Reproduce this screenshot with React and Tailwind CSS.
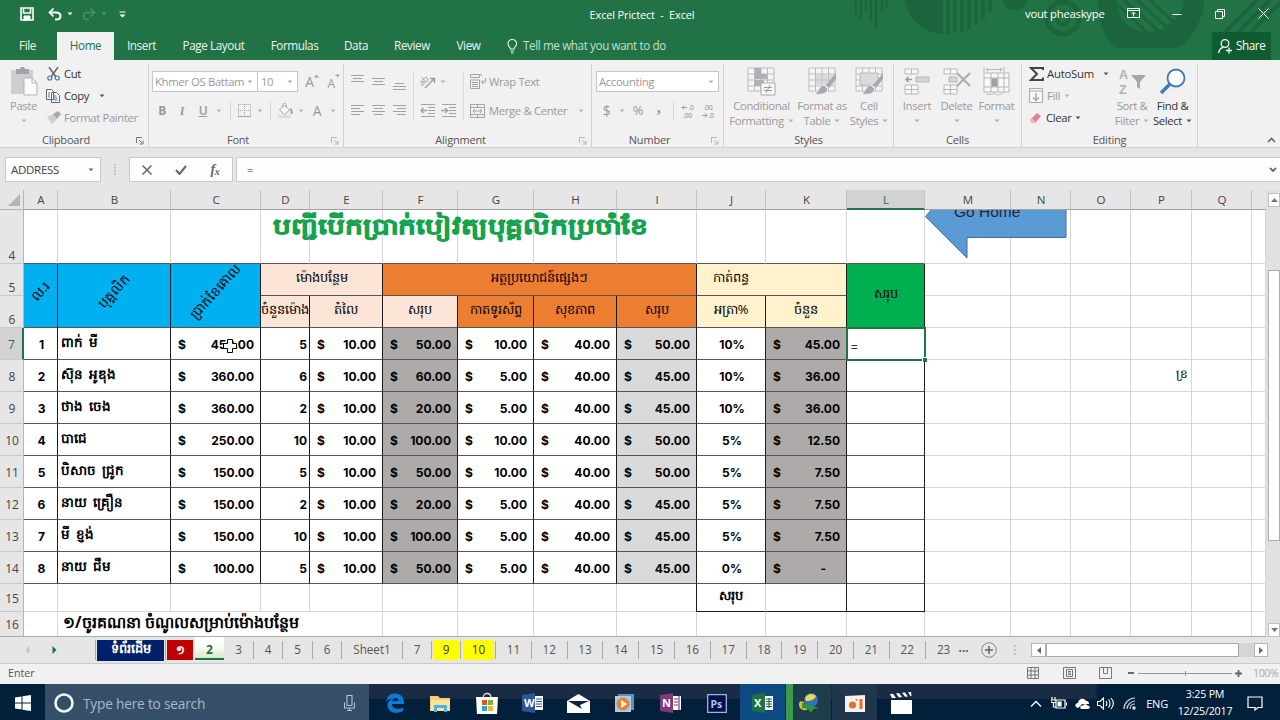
import { clsx } from 'clsx';

const ROWS = [
  { no: 1, name: 'ពាក់ មី', c: '450.00', d: 5, f: '50.00', g: '10.00', i: '50.00', j: '10%', k: '45.00' },
  { no: 2, name: 'ស៊ុន អូឌុង', c: '360.00', d: 6, f: '60.00', g: '5.00', i: '45.00', j: '10%', k: '36.00' },
  { no: 3, name: 'ថាង ចេង', c: '360.00', d: 2, f: '20.00', g: '5.00', i: '45.00', j: '10%', k: '36.00' },
  { no: 4, name: 'បាជេ', c: '250.00', d: 10, f: '100.00', g: '10.00', i: '50.00', j: '5%', k: '12.50' },
  { no: 5, name: 'បិសាច ជ្រូក', c: '150.00', d: 5, f: '50.00', g: '10.00', i: '50.00', j: '5%', k: '7.50' },
  { no: 6, name: 'នាយ គ្រឿន', c: '150.00', d: 2, f: '20.00', g: '5.00', i: '45.00', j: '5%', k: '7.50' },
  { no: 7, name: 'មី ខ្ញង់', c: '150.00', d: 10, f: '100.00', g: '5.00', i: '45.00', j: '5%', k: '7.50' },
  { no: 8, name: 'នាយ ជឹម', c: '100.00', d: 5, f: '50.00', g: '5.00', i: '45.00', j: '0%', k: '-' },
];

const COLUMNS = 'ABCDEFGHIJKLMNOPQ'.split('');

const SHEETS_LEFT = [
  { label: '3', width: 'w-[30px]' },
  { label: '4', width: 'w-[29px]' },
  { label: '5', width: 'w-[30px]' },
  { label: '6', width: 'w-[29px]' },
  { label: 'Sheet1', width: 'w-[61px]' },
  { label: '7', width: 'w-[29px]' },
];

const Slot = ({ className, children }) => (
  <div className={clsx('flex shrink-0 items-center justify-center', className)}>{children}</div>
);

const Caret = ({ className = 'text-[#b5b3b5]' }) => (
  <svg className={clsx('shrink-0', className)} width="6" height="4" viewBox="0 0 6 4">
    <path d="M0.5 0.5h5L3 3.3z" fill="currentColor" />
  </svg>
);

const Launcher = ({ className = 'text-[#b9b7b9]' }) => (
  <svg className={className} width="8" height="8" viewBox="0 0 8 8" fill="none" stroke="currentColor">
    <path d="M0.5 6V0.5H6M3 3l3.5 3.5M7 3.5V7H3.5" />
  </svg>
);

const Group = ({ label, width, launcher, labelShift, children }) => (
  <div className={clsx('flex h-full shrink-0 flex-col', width)}>
    <div className="relative my-1 flex flex-1 flex-col border-r border-[#d3d1d3]">
      <div className="flex h-[67px]">{children}</div>
      <div className="flex h-4 items-center justify-center">
        <span className={clsx('text-[11px] leading-none tracking-[-0.2px] text-[#555]', labelShift)}>{label}</span>
      </div>
      {launcher && <div className="absolute right-1 bottom-0.5">{launcher}</div>}
    </div>
  </div>
);

const BigButton = ({ width, icon, lines, dark }) => (
  <div
    className={clsx('flex shrink-0 flex-col items-center', width, dark ? 'text-[#333]' : 'text-[#9b999b]')}
  >
    <div className="flex h-[34px] items-center justify-center">{icon}</div>
    <div className="flex h-[15px] items-center text-[11.3px] leading-none whitespace-nowrap">{lines[0]}</div>
    <div className="flex h-[15px] items-center gap-1 text-[11.3px] leading-none whitespace-nowrap">
      {lines[1]}
      <Caret className={dark ? 'text-[#555]' : 'text-[#b5b3b5]'} />
    </div>
  </div>
);

const Lines = ({ rows, y = 3 }) => (
  <svg width="14" height="18" viewBox="0 0 14 18" stroke="#a3a1a3">
    {rows.map(([a, b], i) => (
      <path key={i} d={`M${a} ${y + i * 3 + 0.5}H${b}`} />
    ))}
  </svg>
);

const Grid3 = () => (
  <g>
    <path d="M1 1h26v23H1z" fill="#f7f6f7" stroke="#bdbabd" />
    <path d="M1 7h26M1 13h26M1 19h26M7.5 1v23M14 1v23M20.5 1v23" stroke="#bdbabd" />
  </g>
);

const Brush = () => (
  <g>
    <path d="M28 6L18 18l3 3 7-9z" fill="#aba9ab" />
    <path d="M16 18c-4 0-5 5-9 9 6 1 12 0 13-5z" fill="#aba9ab" stroke="#f1f1f1" />
  </g>
);

const TitleBar = () => (
  <div className="relative flex h-8 items-center text-white">
    <div className="flex w-[480px] items-center pb-1">
      <svg className="ml-5" width="14" height="14" viewBox="0 0 14 14" fill="none" stroke="#fff" strokeWidth="1.6">
        <path d="M1 1h12v12H1z" />
        <path d="M3.5 1v5h7V1" />
        <path d="M4 9h6v4H4zM6 10v3" fill="#fff" strokeWidth="1" />
      </svg>
      <svg className="ml-3.5" width="14" height="13" viewBox="0 0 14 13" fill="none" stroke="#fff" strokeWidth="2">
        <path d="M5.5 0.5L1.5 4.5l4 4" strokeWidth="1.7" />
        <path d="M1.5 4.5h6.5c6 0 6 7 0 7H7" />
      </svg>
      <Caret className="ml-[5px] text-white" />
      <svg className="ml-[9px]" width="14" height="13" viewBox="0 0 14 13" fill="none" stroke="#4b9069" strokeWidth="1.5">
        <path d="M8.5 0.5l4 4-4 4" />
        <path d="M12.5 4.5H6c-6 0-6 7 0 7h1" />
      </svg>
      <Caret className="ml-[5px] text-[#4b9069]" />
      <svg className="ml-3" width="7" height="7" viewBox="0 0 7 7" fill="#fff">
        <path d="M0.5 0.5h6v1h-6zM0.5 3.5h6l-3 3z" />
      </svg>
    </div>
    <div className="flex w-[320px] justify-center text-[11px] leading-none tracking-[-0.15px] whitespace-pre">
      <span className="pb-1 pl-1">Excel Prictect  -  Excel</span>
    </div>
    <div className="flex flex-1 items-center pb-1">
      <span className="ml-[225px] w-20 text-[11.3px] leading-none tracking-[-0.25px] whitespace-nowrap">vout pheaskype</span>
      <svg className="ml-[22px]" width="13" height="11" viewBox="0 0 13 11" fill="none" stroke="#fff">
        <path d="M0.5 0.5h12v9h-12zM0.5 2.5h12M6.5 8.5v-4M4.5 6l2-2 2 2" />
      </svg>
      <svg className="ml-8" width="10" height="10" viewBox="0 0 10 10" stroke="#fff">
        <path d="M0.5 5.5h9" />
      </svg>
      <svg className="ml-[33px]" width="11" height="10" viewBox="0 0 11 10" fill="none" stroke="#fff">
        <path d="M0.5 2.5h7v7h-7zM2.5 2.5v-2h7v7h-2" />
      </svg>
      <svg className="ml-8" width="11" height="11" viewBox="0 0 11 11" stroke="#fff">
        <path d="M0.5 0.5l10 10M10.5 0.5l-10 10" />
      </svg>
    </div>
  </div>
);

const MENU = [
  ['Insert', 'w-[55px]'],
  ['Page Layout', 'w-[89px]'],
  ['Formulas', 'w-[73px]'],
  ['Data', 'w-[50px]'],
  ['Review', 'w-[62px]'],
  ['View', 'w-[51px]'],
];

const MenuTabs = () => (
  <div className="relative flex h-7 text-[11.7px] leading-none tracking-[-0.4px] text-[#e9f5ee]">
    <Slot className="w-[57px] pr-0.5">File</Slot>
    <Slot className="w-[57px] bg-[#f1f1f1] text-[#217346]">Home</Slot>
    {MENU.map(([label, width]) => (
      <Slot key={label} className={width}>
        {label}
      </Slot>
    ))}
    <div className="flex flex-1 items-center text-[#bfe0cd]">
      <svg className="ml-[13px]" width="11" height="15" viewBox="0 0 11 15" fill="none" stroke="#e9f5ee" strokeWidth="1.1">
        <path d="M3.5 10C3.5 8 1 7.5 1 4.7a4.3 4.2 0 0 1 8.600 0C9.600 7.500 7 8 7 10zM3.500 12h3.600M4 14h2.500" />
      </svg>
      <span className="ml-[5px] whitespace-nowrap">Tell me what you want to do</span>
    </div>
    <div className="mr-[9px] flex w-[59px] items-center gap-1 bg-[#0e5c2f] pl-1.5 text-white">
      <svg width="14" height="15" viewBox="0 0 14 15" fill="none" stroke="#fff" strokeWidth="1.3">
        <circle cx="7" cy="4.5" r="3.8" />
        <path d="M0.7 14c0.3-3 2-5 4.5-5.7M11 8.5v6M8 11.5h6" />
      </svg>
      Share
    </div>
  </div>
);

const HeaderArt = () => (
  <svg className="absolute top-0 right-0" width="440" height="60" viewBox="840 0 440 60" fill="none" stroke="#1c643b">
    <path d="M856 0v14M861 0v19M866 0v10M871 0v22M876 0v28M882 0v10M887 0v7" strokeWidth="2.5" />
    <path d="M905 0h38v34c-22-1-34-16-38-34z" fill="#1c643b" stroke="none" />
    <path d="M948 0v34M955 0v33M962 0v32M969 0v29M976 0v25M983 0v20M990 0v12" strokeWidth="3.5" />
    <path d="M1003 0h24c-1 12-22 14-24 0z" fill="#1c643b" stroke="none" />
    <circle cx="1063" cy="18" r="16" strokeWidth="5" />
    <circle cx="1063" cy="18" r="6" strokeWidth="4" />
    <path d="M1098 0h18c2 19 13 32 32 32s34-14 36-32h20c-1 20-11 39-26 48h-62c-11-9-18-27-18-48z" fill="#1c643b" stroke="none" />
    <path d="M1112 0l50 46M1124 0l40 36M1137 0l34 31M1150 0l28 26" strokeWidth="3" />
    <path d="M1225 32l32-32M1238 32l32-32M1251 32l30-30" strokeWidth="4" />
  </svg>
);

const ClipboardGroup = () => (
  <Group label="Clipboard" width="w-[149px]" labelShift="mr-4" launcher={<Launcher className="text-[#777]" />}>
    <BigButton
      width="w-[47px]"
      lines={['Paste', '']}
      icon={
        <svg width="28" height="29" viewBox="0 0 28 29">
          <path d="M1 3h22v24H1z" fill="#cfcdd0" />
          <path d="M6 2h4c0-3 5-3 5 0h4v5H6z" fill="#a5a3aa" />
          <path d="M14 11h8l5 5v12H14z" fill="#fbfbfb" stroke="#b5b3b8" />
          <path d="M22 11v5h5" fill="none" stroke="#b5b3b8" />
        </svg>
      }
    />
    <div className="flex flex-col text-[11.3px] leading-none text-[#333]">
      <div className="flex h-5 items-center">
        <svg width="13" height="14" viewBox="0 0 13 14" fill="none" strokeWidth="1.5">
          <path d="M2 0l7 10M11 0L4 10" stroke="#666" />
          <circle cx="2.8" cy="11" r="2" stroke="#3e77b8" strokeWidth="1.2" />
          <circle cx="10.2" cy="11" r="2" stroke="#3e77b8" strokeWidth="1.2" />
        </svg>
        <span className="ml-1">Cut</span>
      </div>
      <div className="flex h-[23px] items-center">
        <svg className="-ml-px" width="14" height="14" viewBox="0 0 14 14" fill="#fff" stroke="#666">
          <path d="M0.5 0.5h5l2 2v8h-7zM5.5 3.5h5l3 3v7h-8z" />
          <path d="M2 4h2M2 6h2M2 8h2M7.5 7h3M7.5 9h4M7.5 11h4" stroke="#3e77b8" />
        </svg>
        <span className="ml-1 w-[35px]">Copy</span>
        <Caret className="text-[#555]" />
      </div>
      <div className="flex h-[21px] items-center text-[#9b999b]">
        <svg width="14" height="13" viewBox="0 0 14 13">
          <path d="M0 6l6-3 4 5-5 5z" fill="#d0cdd0" />
          <path d="M6 3l5-3 3 3-4 5z" fill="#aaa7aa" />
        </svg>
        <span className="ml-[3px] whitespace-nowrap">Format Painter</span>
      </div>
    </div>
  </Group>
);

const VSep = () => <div className="h-5 w-px shrink-0 bg-[#d8d6d8]" />;

const FontGroup = () => (
  <Group label="Font" width="w-[195px]" labelShift="mr-4" launcher={<Launcher />}>
    <div className="flex flex-col pt-[7px] pl-[3px] text-[#9b999b]">
      <div className="flex h-[21px] items-center">
        <div className="flex h-[21px] w-[106px] items-center justify-between border border-[#c6c6c6] bg-white pr-1 pl-0.5 text-[11.3px] leading-none whitespace-nowrap">
          Khmer OS Battam
          <Caret />
        </div>
        <div className="-ml-px flex h-[21px] w-[41px] items-center justify-between border border-[#c6c6c6] bg-white pr-1 pl-[3px] text-[11.3px] leading-none">
          10
          <Caret />
        </div>
        <Slot className="ml-[5px] w-[13px] text-[14px] leading-none">A</Slot>
        <svg className="-mt-3 -ml-0.5" width="5" height="4" viewBox="0 0 5 4" fill="#9aa5b5"><path d="M0 3.5h5L2.5 0.5z" /></svg>
        <Slot className="ml-1.5 w-[12px] pt-1 text-[12px] leading-none">A</Slot>
        <svg className="-mt-3 -ml-0.5" width="5" height="4" viewBox="0 0 5 4" fill="#9aa5b5"><path d="M0 0.5h5L2.5 3.5z" /></svg>
      </div>
      <div className="mt-2 flex h-[21px] items-center text-[12px] leading-none">
        <Slot className="w-[20px] font-bold">B</Slot>
        <Slot className="w-[20px] font-serif font-bold italic">I</Slot>
        <Slot className="w-[22px] font-semibold underline">U</Slot>
        <Slot className="w-[10px]"><Caret /></Slot>
        <Slot className="w-[13px]"><VSep /></Slot>
        <Slot className="w-[15px]">
          <svg width="13" height="13" viewBox="0 0 13 13" fill="none" stroke="#a5a3a5">
            <path d="M0.5 0.5h12v12M0.5 0.5v12M6.5 0v12M0 6.5h12" strokeDasharray="1 1" />
            <path d="M0 12.5h13" />
          </svg>
        </Slot>
        <Slot className="w-[16px]"><Caret /></Slot>
        <Slot className="w-[5px]"><VSep /></Slot>
        <Slot className="w-[24px]">
          <svg width="15" height="15" viewBox="0 0 15 15" fill="#fafafa" stroke="#a5a3a5">
            <path d="M1.5 7l5-5 5 5-5 4.5zM5 4V1.500c0-1.500 3-1.500 3 0v3" />
            <path d="M12 6c2 1 2 3 1.500 5" strokeWidth="2" fill="none" />
            <path d="M0 13.500h13" stroke="#e6d9dc" strokeWidth="3" />
          </svg>
        </Slot>
        <Slot className="w-[8px]"><Caret /></Slot>
        <Slot className="w-[24px] text-[14px]">A</Slot>
        <Slot className="w-[8px]"><Caret /></Slot>
      </div>
    </div>
  </Group>
);

const Indent = ({ flip }) => (
  <svg width="16" height="13" viewBox="0 0 16 13" stroke="#a5a3a5" fill="none">
    <path d="M1 0.5h14M8 3.500h7M8 6.500h7M8 9.500h7M1 12.500h14" />
    {flip ? <path d="M0 6.500h6M4 4l2.500 2.500L4 9" strokeWidth="1.5" /> : <path d="M7 6.500H1M3.500 4L1 6.500 3.500 9" strokeWidth="1.5" />}
  </svg>
);

const AlignmentGroup = () => (
  <Group label="Alignment" width="w-[248px]" labelShift="mr-3.5" launcher={<Launcher />}>
    <div className="flex pt-[7px] pl-[3px] text-[11.3px] leading-none text-[#9b999b]">
      <div className="flex w-[63px] flex-col gap-2">
        <div className="flex h-[21px] items-center">
          <Slot className="w-[21px]"><Lines y={2} rows={[[0, 13], [2, 11], [0, 13]]} /></Slot>
          <Slot className="w-[21px]"><Lines y={5} rows={[[0, 13], [2, 11], [0, 13]]} /></Slot>
          <Slot className="w-[21px]"><Lines y={10} rows={[[2, 11], [0, 13], [0, 13]]} /></Slot>
        </div>
        <div className="flex h-[21px] items-center">
          <Slot className="w-[21px]"><Lines rows={[[0, 13], [0, 9], [0, 13], [0, 9]]} /></Slot>
          <Slot className="w-[21px]"><Lines rows={[[0, 13], [2, 11], [0, 13], [2, 11]]} /></Slot>
          <Slot className="w-[21px]"><Lines rows={[[0, 13], [4, 13], [0, 13], [4, 13]]} /></Slot>
        </div>
      </div>
      <div className="ml-[3px] flex h-[50px] w-[51px] flex-col gap-2 border-x border-[#dcdadc]">
        <div className="flex h-[21px] items-center gap-1 pl-1.5">
          <svg width="16" height="15" viewBox="0 0 16 15" fill="none" stroke="#9b999b" strokeWidth="1.3">
            <text x="-1" y="9" fontSize="9" fill="#9b999b" stroke="none" transform="rotate(-40 5 7)">ab</text>
            <path d="M5 14L14 5M10 4.500h4.500V9" />
          </svg>
          <Caret />
        </div>
        <div className="flex h-[21px] items-center gap-[5px] pl-1.5">
          <Indent />
          <Indent flip />
        </div>
      </div>
      <div className="ml-1.5 flex flex-col gap-2 whitespace-nowrap">
        <div className="flex h-[21px] items-center gap-[3px]">
          <svg width="16" height="15" viewBox="0 0 16 15" fill="none" stroke="#a5a3a5">
            <path d="M0.5 0.5h9v3h-9zM0.5 6h9v8.500h-9zM2 8.500h6M2 10.500h6M2 12.500h6M12 1h-2M15.500 4v4h-4M13.500 6l-2 2 2 2" />
          </svg>
          Wrap Text
        </div>
        <div className="flex h-[21px] items-center gap-[3px]">
          <svg width="16" height="14" viewBox="0 0 16 14" fill="none" stroke="#a5a3a5">
            <path d="M0.5 0.5h14v13h-14zM0.5 3.500h14M0.5 10.500h14M7.500 0.5v3M7.500 10.500v3M3 7h9M5 5L3 7l2 2M10 5l2 2-2 2" />
          </svg>
          <span className="w-[86px]">Merge &amp; Center</span>
          <Caret />
        </div>
      </div>
    </div>
  </Group>
);

const NumberGroup = () => (
  <Group label="Number" width="w-[132px]" labelShift="mr-4" launcher={<Launcher />}>
    <div className="flex flex-col pt-[7px] pl-1 text-[#9b999b]">
      <div className="flex h-[21px] w-[123px] items-center justify-between border border-[#c6c6c6] bg-white pr-1 pl-0.5 text-[11.3px] leading-none">
        Accounting
        <Caret />
      </div>
      <div className="mt-2 flex h-[21px] items-center leading-none">
        <Slot className="w-[21px] text-[14px]">$</Slot>
        <Slot className="w-[10px]"><Caret /></Slot>
        <Slot className="w-[22px] text-[13px]">%</Slot>
        <Slot className="w-[19px] pb-1.5 font-['Liberation_Serif',serif] text-[16px] font-bold">,</Slot>
        <Slot className="w-[11px]"><VSep /></Slot>
        <svg className="ml-0.5 overflow-visible font-['Liberation_Sans',sans-serif]" width="15" height="16" viewBox="0 0 15 16" fill="none" stroke="#9b999b">
          <path d="M1 4.500h5M3 2.500L1 4.500l2 2" />
          <text x="7.500" y="7" fontSize="7" fill="#8b898b" stroke="none">.0</text>
          <text x="2" y="15" fontSize="7" fill="#8b898b" stroke="none">.00</text>
        </svg>
        <svg className="ml-[5px] overflow-visible font-['Liberation_Sans',sans-serif]" width="15" height="16" viewBox="0 0 15 16" fill="none" stroke="#9b999b">
          <path d="M1 12.500h5M4 10.500l2 2-2 2" />
          <text x="2.500" y="7" fontSize="7" fill="#8b898b" stroke="none">.00</text>
          <text x="7.500" y="15" fontSize="7" fill="#8b898b" stroke="none">.0</text>
        </svg>
      </div>
    </div>
  </Group>
);

const StylesGroup = () => (
  <Group label="Styles" width="w-[170px]">
    <BigButton
      width="w-[75px]"
      lines={['Conditional', 'Formatting']}
      icon={
        <svg width="29" height="29" viewBox="0 0 29 29">
          <Grid3 />
          <path d="M8 1h6v6H8zM8 7h12v5H8zM8 13h9v6H8z" fill="#b3b0b5" />
          <path d="M14 16h14v12H14z" fill="#fafafa" stroke="#aaa8aa" />
          <path d="M17 20.500h8M17 23.500h8M23 18l-4 8" stroke="#999" />
        </svg>
      }
    />
    <BigButton
      width="w-[46px]"
      lines={['Format as', 'Table']}
      icon={
        <svg width="29" height="29" viewBox="0 0 29 29">
          <Grid3 />
          <path d="M8 8h19v11H8z" fill="#dddadf" />
          <path d="M14 7v12M20.500 7v12M8 13h19" stroke="#c3c0c3" />
          <Brush />
        </svg>
      }
    />
    <BigButton
      width="w-[48px]"
      lines={['Cell', 'Styles']}
      icon={
        <svg width="29" height="29" viewBox="0 0 29 29">
          <Grid3 />
          <path d="M5 6h18v12H5z" fill="#dddadf" stroke="#bdbabd" />
          <Brush />
        </svg>
      }
    />
  </Group>
);

const CellsGroup = () => (
  <Group label="Cells" width="w-[128px]">
    <BigButton
      width="w-[46px]"
      lines={['Insert', '']}
      icon={
        <svg width="26" height="27" viewBox="0 0 26 27" fill="#f8f8f8" stroke="#b9b6b9">
          <path d="M1 1h13v5H1zM7.500 1v5M1 17h13v9H1zM7.500 17v9M1 21.500h13" />
          <path d="M12 9h13v5H12z" fill="#d6d3d9" />
          <path d="M8 11.500H2M4.500 9L2 11.500 4.500 14" fill="none" stroke="#9a98a0" strokeWidth="1.5" />
        </svg>
      }
    />
    <BigButton
      width="w-[33px]"
      lines={['Delete', '']}
      icon={
        <svg width="28" height="27" viewBox="0 0 28 27" fill="#f8f8f8" stroke="#b9b6b9">
          <path d="M1 1h13v5H1zM7.500 1v5M1 17h13v9H1zM7.500 17v9M1 21.500h13" />
          <path d="M6 9h8v5H6z" fill="#d6d3d9" />
          <path d="M14 5l13 13M27 5L14 18" fill="none" stroke="#b3aaac" strokeWidth="2" />
        </svg>
      }
    />
    <BigButton
      width="w-[47px]"
      lines={['Format', '']}
      icon={
        <svg width="27" height="29" viewBox="0 0 27 29" fill="#f8f8f8" stroke="#b9b6b9">
          <path d="M1 0v5M21 0v5M3 2.500h16M5 1L3 2.500 5 4M17 1l2 1.500L17 4" />
          <path d="M1 6h25v19H1zM1 11h25M1 20h25M8 6v19M15 6v19M21 6v19M3 27c6 2 8-2 10 0s6 0 7-1" />
          <path d="M8.500 11.500h6v8h-6z" fill="#a19fa3" />
        </svg>
      }
    />
  </Group>
);

const EditingGroup = () => (
  <Group label="Editing" width="w-[176px]">
    <div className="flex w-[88px] flex-col pl-[7px] text-[11.3px] leading-none text-[#333]">
      <div className="flex h-5 items-center">
        <svg width="15" height="14" viewBox="0 0 15 14" fill="none" stroke="#444" strokeWidth="2">
          <path d="M14 3V1H2l6 6-6 6h12v-2.500" />
        </svg>
        <span className="ml-[3px] w-[56px] tracking-[-0.2px]">AutoSum</span>
        <Caret className="text-[#555]" />
      </div>
      <div className="flex h-[23px] items-center text-[#9b999b]">
        <svg width="14" height="15" viewBox="0 0 14 15" fill="#f8f8f8" stroke="#aaa8aa">
          <path d="M0.5 0.5h13v14h-13zM0.5 3h13" />
          <path d="M7 5v7M4 9.500l3 3 3-3" fill="none" strokeWidth="1.5" />
        </svg>
        <span className="mr-1 ml-1">Fill</span>
        <Caret />
      </div>
      <div className="flex h-[21px] items-center">
        <svg width="14" height="12" viewBox="0 0 14 12">
          <path d="M1 8l7-7 4 3-6 7H3z" fill="#df8093" />
          <path d="M1 8l2-2 4 4-1 1H3z" fill="#eeb4bf" />
        </svg>
        <span className="mr-1 ml-[3px]">Clear</span>
        <Caret className="text-[#555]" />
      </div>
    </div>
    <BigButton
      width="w-[44px]"
      lines={['Sort &', 'Filter']}
      icon={
        <svg className="overflow-visible font-['Liberation_Sans',sans-serif]" width="28" height="28" viewBox="0 0 28 28">
          <path d="M13 8h15l-6 7v7l-3-2v-5z" fill="#a9a7a9" />
          <text x="1" y="11.500" fontSize="12.500" fontWeight="700" fill="#b3b1b8">A</text>
          <text x="1" y="26.500" fontSize="12.500" fontWeight="700" fill="#b3b1b8">Z</text>
        </svg>
      }
    />
    <BigButton
      dark
      width="w-[37px]"
      lines={['Find &', 'Select']}
      icon={
        <svg width="27" height="27" viewBox="0 0 27 27" fill="#fdfdfd" stroke="#4478b5">
          <path d="M11 16l-9 9" strokeWidth="3.5" />
          <circle cx="17" cy="10" r="8.5" strokeWidth="1.8" />
        </svg>
      }
    />
  </Group>
);

const Ribbon = () => (
  <div className="flex h-[88px] border-b border-[#d2d0d2] bg-[#f1f1f1]">
    <ClipboardGroup />
    <FontGroup />
    <AlignmentGroup />
    <NumberGroup />
    <StylesGroup />
    <CellsGroup />
    <EditingGroup />
    <div className="flex flex-1 items-end justify-end pr-1 pb-1">
      <svg width="9" height="6" viewBox="0 0 9 6" fill="none" stroke="#666" strokeWidth="1.6">
        <path d="M1 5l3.500-3.500L8 5" />
      </svg>
    </div>
  </div>
);

const FormulaBar = () => (
  <div className="flex h-[42px] items-center pt-px pl-[5px]">
    <div className="flex h-[25px] w-[96px] items-center justify-between border border-[#c9c9c9] bg-[#fdfdfd] pr-1.5 pl-[5px] text-[11.6px] leading-none text-[#444]">
      ADDRESS
      <Caret className="text-[#666]" />
    </div>
    <Slot className="w-7">
      <svg width="2" height="11" viewBox="0 0 2 11" fill="#aaa">
        <path d="M0 0h1.500v1.500H0zM0 3h1.500v1.500H0zM0 6h1.500v1.500H0zM0 9h1.500v1.500H0z" />
      </svg>
    </Slot>
    <div className="flex h-[25px] w-[104px] items-center border border-[#c9c9c9] bg-[#fdfdfd]">
      <Slot className="w-[34px]">
        <svg width="10" height="10" viewBox="0 0 10 10" stroke="#666" strokeWidth="1.5"><path d="M0.5 0.5l9 9M9.500 0.5l-9 9" /></svg>
      </Slot>
      <Slot className="w-[34px]">
        <svg width="12" height="10" viewBox="0 0 12 10" fill="none" stroke="#666" strokeWidth="2"><path d="M1 5l3.500 4L11 1" /></svg>
      </Slot>
      <Slot className="w-[34px] font-['Liberation_Serif',serif] text-[14px] font-bold italic leading-none text-[#666]">
        f<span className="pt-1 text-[10px]">x</span>
      </Slot>
    </div>
    <div className="ml-[3px] flex h-[25px] flex-1 items-center justify-between border border-r-0 border-[#c9c9c9] bg-[#fdfdfd] pr-[3px] pl-2.5 text-[11.3px] leading-none text-[#333]">
      =
      <svg width="8" height="6" viewBox="0 0 8 6" fill="none" stroke="#666" strokeWidth="1.8"><path d="M1 1l3 3 3-3" /></svg>
    </div>
  </div>
);

const line = 'border-r border-b';
const plain = 'border-[#d6d6d6]';
const dark = 'border-r-[#1c1c1c] border-b-[#555]';

const Cell = ({ className, children }) => (
  <div className={clsx('flex min-w-0 items-center overflow-hidden leading-none whitespace-nowrap', line, className)}>
    {children}
  </div>
);

const Blank = ({ count, className }) =>
  Array.from({ length: count }, (_, i) => <Cell key={i} className={clsx(className || plain)} />);

const RowHead = ({ n, active, low }) => (
  <div
    className={clsx(
      "flex justify-center border-b border-[#c8c8c8] pl-px font-['Open_Sans',sans-serif] text-[12px] font-normal leading-none",
      low ? 'items-end pb-px' : 'items-center pt-0.5',
      active ? 'border-r-2 border-r-[#217346] bg-[#d2d2d2] text-[#217346]' : 'border-r border-r-[#b5b5b5] bg-[#e6e6e6] text-[#444]'
    )}
  >
    {n}
  </div>
);

const Money = ({ value, bg, dash }) => (
  <Cell className={clsx(dark, 'justify-between pt-[3px] pl-[7px]', dash ? 'pr-5' : 'pr-1.5', bg)}>
    <span>$</span>
    <span>{value}</span>
  </Cell>
);

const DataRow = ({ row, index }) => (
  <>
    <RowHead n={index + 7} active={index === 0} />
    <Cell className={clsx(dark, 'justify-center pt-[3px] pl-0.5')}>{row.no}</Cell>
    <Cell className={clsx(dark, 'pb-px pl-[3px] text-[13.5px] [word-spacing:3px]')}>{row.name}</Cell>
    <Money value={row.c} />
    <Cell className={clsx(dark, 'justify-end pt-[3px] pr-0.5')}>{row.d}</Cell>
    <Money value="10.00" />
    <Money value={row.f} bg="bg-[#aeaaaa]" />
    <Money value={row.g} />
    <Money value="40.00" />
    <Money value={row.i} bg="bg-[#d9d9d9]" />
    <Cell className={clsx(dark, 'justify-center pt-[3px] pl-0.5')}>{row.j}</Cell>
    <Money value={row.k} bg="bg-[#aeaaaa]" dash={row.k === '-'} />
    {index === 0 ? (
      <div className="relative z-10 -mt-px -mr-px -mb-px -ml-px flex items-center border-2 border-[#217346] pt-1 pl-0.5 text-[13px] font-normal leading-none text-[#333]">
        =
        <div className="absolute -right-[3px] -bottom-[3px] size-[5px] border-t border-l border-white bg-[#217346]" />
      </div>
    ) : (
      <Cell className={dark} />
    )}
    <Blank count={3} />
    {index === 1 ? (
      <Cell className={clsx(plain, 'justify-end pr-[3px] pb-1 text-[12px] font-normal')}>ខ្រ</Cell>
    ) : (
      <Blank count={1} />
    )}
    <Blank count={2} />
  </>
);

const Slanted = ({ children }) => (
  <Cell className={clsx(dark, 'row-span-2 justify-center bg-[#00b0f0] pb-2 text-[13.5px]')}>
    <span className="-rotate-[48deg]">{children}</span>
  </Cell>
);

const Head = ({ className, children }) => (
  <Cell className={clsx(dark, 'pb-1 text-[13px]', className)}>{children}</Cell>
);

const Sheet = () => (
  <div className="flex h-[447px] tracking-normal">
    <div className="relative w-[1266px] overflow-hidden border-b border-[#ababab] bg-white">
      <div className="grid grid-cols-[24px_34px_113px_90px_49px_73px_75px_76px_83px_80px_69px_81px_78px_86px_60px_60px_61px_60px_14px] grid-rows-[20px_54px_repeat(10,32px)_28px_25px] text-black">
        <div className="flex items-end justify-end border-r border-b border-[#b5b5b5] bg-[#e6e6e6] p-[3px]">
          <svg width="12" height="12" viewBox="0 0 12 12" fill="#b5b5b5"><path d="M12 0v12H0z" /></svg>
        </div>
        {COLUMNS.map((c) => (
          <div
            key={c}
            className={clsx(
              'flex items-center justify-center border-r border-r-[#c3c3c3] pt-px pl-px text-[11.5px] leading-none',
              c === 'L' ? 'border-b-2 border-b-[#217346] bg-[#d2d2d2] text-[#217346]' : 'border-b border-b-[#9f9f9f] bg-[#e6e6e6] text-[#444]'
            )}
          >
            {c}
          </div>
        ))}
        <div className="border-b border-b-[#9f9f9f] bg-[#e6e6e6]" />

        <RowHead n={4} low />
        <Blank count={3} className="border-r-[#d6d6d6] border-b-[#555]" />
        <div className="relative col-span-8 grid grid-cols-[49px_73px_75px_76px_83px_80px_69px_81px]">
          <Blank count={8} className="border-r-[#d6d6d6] border-b-[#555]" />
          <div className="absolute top-0 left-[52px] w-[288px] scale-x-[1.275] text-center text-[22px] font-bold leading-[30px] whitespace-nowrap text-[#16a34f] [-webkit-text-stroke:0.7px_#16a34f]">
            បញ្ជីបើកប្រាក់បៀវត្យបុគ្គលិកប្រចាំខែ
          </div>
        </div>
        <Blank count={1} className="border-r-[#d6d6d6] border-b-[#555]" />
        <Blank count={6} />

        <RowHead n={5} low />
        <Slanted>ល.រ</Slanted>
        <Slanted>បុគ្គលិក</Slanted>
        <Slanted>ប្រាក់ខែគោល</Slanted>
        <Head className="col-span-2 justify-center bg-[#fce4d6]">ម៉ោងបន្ថែម</Head>
        <Head className="col-span-4 justify-center bg-[#ed7d31]">អត្ថប្រយោជន៍ផ្សេងៗ</Head>
        <Head className="col-span-2 bg-[#fff2cc] pl-4">កាត់ពន្ធ</Head>
        <Head className="row-span-2 justify-center bg-[#00b050]">សរុប</Head>
        <Blank count={6} />

        <RowHead n={6} low />
        <Head className="justify-center bg-[#fce4d6]">ចំនួនម៉ោង</Head>
        <Head className="justify-center bg-[#fce4d6]">តំលៃ</Head>
        <Head className="justify-center bg-[#fce4d6]">សរុប</Head>
        <Head className="justify-center bg-[#ed7d31]">កាតទូរស័ព្ទ</Head>
        <Head className="justify-center bg-[#ed7d31]">សុខភាព</Head>
        <Head className="justify-center bg-[#ed7d31]">សរុប</Head>
        <Head className="justify-center bg-[#fff2cc]">អត្រា%</Head>
        <Head className="justify-center bg-[#fff2cc]">ចំនួន</Head>
        <Blank count={6} />

        <div className="col-span-full row-span-8 grid grid-cols-subgrid grid-rows-subgrid font-['Inter',sans-serif] text-[12px] font-bold">
          {ROWS.map((row, i) => (
            <DataRow key={row.no} row={row} index={i} />
          ))}
        </div>

        <RowHead n={15} />
        <Blank count={9} />
        <Cell className="-ml-px justify-center border-l border-r-[#d6d6d6] border-b-[#1c1c1c] border-l-[#1c1c1c] pb-1 text-[13px] font-bold">សរុប</Cell>
        <Cell className="border-r-[#1c1c1c] border-b-[#1c1c1c]" />
        <Cell className="border-r-[#1c1c1c] border-b-[#1c1c1c]" />
        <Blank count={6} />

        <RowHead n={16} />
        <Blank count={1} />
        <Cell className={clsx(plain, 'col-span-4 pb-0.5 pl-[5px] text-[15.8px] font-bold')}>១/ចូរគណនា ចំណូលសម្រាប់ម៉ោងបន្ថែម</Cell>
        <Blank count={13} />
      </div>

      {/* callout shape floating above the cells */}
      <div className="absolute top-5 left-[925px] h-[50px] w-[142px] overflow-hidden">
        <svg className="absolute inset-0" width="142" height="50" viewBox="0 0 142 50">
          <path d="M7 -1L0.5 6.500 42 48V27.500h99V-1z" fill="#5b9bd5" stroke="#41719c" />
        </svg>
        <span className="absolute -top-[7px] left-[29px] font-['Liberation_Sans',sans-serif] text-[15.5px] leading-[18px] whitespace-nowrap text-[#1b2a3a]">
          Go Home
        </span>
      </div>

      {/* cell pointer */}
      <svg className="absolute top-[149px] left-[223px]" width="14" height="14" viewBox="0 0 14 14">
        <path d="M4.500 0.5h5v4h4v5h-4v4h-5v-4h-4v-5h4z" fill="#fff" stroke="#000" />
      </svg>
    </div>
    <div className="flex flex-1 flex-col bg-[#e0e0e0] pt-[3px] pl-0.5">
      <Slot className="h-[14px] w-full border border-[#c0c0c0] bg-white">
        <svg width="7" height="4" viewBox="0 0 7 4" fill="#777"><path d="M0 4h7L3.500 0z" /></svg>
      </Slot>
      <div className="h-[63px]" />
      <div className="h-[271px] border border-[#ababab] bg-white" />
      <div className="flex-1" />
      <Slot className="h-[14px] w-full border border-[#c0c0c0] bg-white">
        <svg width="7" height="4" viewBox="0 0 7 4" fill="#777"><path d="M0 0h7L3.500 4z" /></svg>
      </Slot>
    </div>
  </div>
);

const SheetTabs = () => (
  <div className="flex h-[27px] border-b border-[#c9c9c9] bg-[#e6e6e6] text-[11.7px] leading-none tracking-normal text-[#555]">
    <div className="flex w-[95px] items-center">
      <svg className="ml-[25px]" width="5" height="8" viewBox="0 0 5 8" fill="#c3c3c3"><path d="M4.500 0v8L0.500 4z" /></svg>
      <svg className="ml-[22px]" width="5" height="8" viewBox="0 0 5 8" fill="#217346"><path d="M0.500 0v8l4-4z" /></svg>
    </div>
    <div className="my-[3px] flex items-center border-x border-[#aaa]">
      <div className="mx-px flex h-[21px] w-[67px] items-center justify-center overflow-hidden bg-[#00206b] pb-1 text-[13px] font-semibold whitespace-nowrap text-white">
        ទំព័រដើម
      </div>
    </div>
    <Slot className="my-[3px] mr-[2px] ml-px w-[26px] bg-[#c00000] font-bold text-white">១</Slot>
    <Slot className="mb-[3px] w-[29px] border-b-2 border-[#217346] bg-linear-to-b from-white from-40% to-[#d3ecc5] pt-1 text-[12px] font-bold text-[#217346]">
      2
    </Slot>
    {SHEETS_LEFT.map(({ label, width }) => (
      <Slot key={label} className={clsx('my-1 border-r border-[#aaa]', width)}>{label}</Slot>
    ))}
    <Slot className="my-[3px] mr-px ml-px w-[26px] bg-[#ff0] text-[#333]">9</Slot>
    <div className="my-1 w-px bg-[#aaa]" />
    <Slot className="my-[3px] mr-px ml-0.5 w-[31px] bg-[#ff0] text-[#333]">10</Slot>
    <div className="my-1 w-px bg-[#aaa]" />
    {Array.from({ length: 12 }, (_, i) => (
      <Slot key={i} className="my-1 w-[35.8px] border-r border-[#aaa]">{i + 11}</Slot>
    ))}
    <Slot className="w-[32px] pl-1">23</Slot>
    <Slot className="w-[12px] pb-1 font-bold text-[#217346]">...</Slot>
    <Slot className="ml-2 w-[22px]">
      <svg width="16" height="16" viewBox="0 0 16 16" fill="none" stroke="#888">
        <circle cx="8" cy="8" r="7.3" />
        <path d="M4 8h8M8 4v8" strokeWidth="1.5" stroke="#666" />
      </svg>
    </Slot>
    <Slot className="w-[30px]">
      <svg width="2" height="11" viewBox="0 0 2 11" fill="#aaa">
        <path d="M0 0h1.500v1.500H0zM0 4h1.500v1.500H0zM0 8h1.500v1.500H0z" />
      </svg>
    </Slot>
    <div className="my-[6px] mr-3 ml-auto flex w-[237px] bg-[#d5d5d5]">
      <Slot className="w-[15px] border border-[#b5b5b5] bg-white">
        <svg width="4" height="7" viewBox="0 0 4 7" fill="#666"><path d="M4 0v7L0 3.500z" /></svg>
      </Slot>
      <div className="w-[193px] border border-[#aaa] bg-white" />
      <div className="flex-1" />
      <Slot className="w-[14px] border border-[#b5b5b5] bg-white">
        <svg width="4" height="7" viewBox="0 0 4 7" fill="#666"><path d="M0 0v7l4-3.500z" /></svg>
      </Slot>
    </div>
  </div>
);

const StatusBar = () => (
  <div className="flex h-5 items-center bg-[#f1f1f1] pb-0.5 text-[10.7px] leading-none tracking-normal text-[#555]">
    <span className="ml-2 flex-1">Enter</span>
    <svg width="12" height="12" viewBox="0 0 12 12" fill="none" stroke="#777"><path d="M0.5 0.5h11v11h-11zM4 0v12M8 0v12M0 4h12M0 8h12" /></svg>
    <svg className="ml-6" width="13" height="12" viewBox="0 0 13 12" fill="none" stroke="#777"><path d="M0.5 0.5h12v11h-12zM3.500 2.500h6v7h-6zM5 4.500h3M5 6h3M5 7.500h3" /></svg>
    <svg className="ml-[23px]" width="13" height="12" viewBox="0 0 13 12" fill="none" stroke="#777"><path d="M0.5 0.5h12v11h-12zM4.500 0v6.500h4V0" /></svg>
    <div className="ml-4 h-[2px] w-1.5 bg-[#666]" />
    <svg className="ml-1" width="94" height="5" viewBox="0 0 94 5" stroke="#999"><path d="M0 2.500h94M47.500 0v5" /></svg>
    <svg className="ml-[3px]" width="7" height="7" viewBox="0 0 7 7" stroke="#666" strokeWidth="1.8"><path d="M0 3.500h7M3.500 0v7" /></svg>
    <span className="mr-0.5 ml-[11px] w-[25px] tracking-[-0.45px] text-[#aaa]">100%</span>
  </div>
);

const Tile = ({ color, letter, paper }) => (
  <svg width="22" height="20" viewBox="0 0 22 20">
    <path d="M11 3h10v14H11z" fill="#fff" />
    <path d={paper} stroke={color} fill="none" strokeWidth="1.2" />
    <path d="M0 2l13-2v20L0 18z" fill={color} />
    <text x="2" y="14" fontSize="11" fontWeight="700" fill="#fff">{letter}</text>
  </svg>
);

const TASKS = [
  {
    id: 'edge',
    icon: (
      <svg width="20" height="20" viewBox="0 0 20 20" fill="none">
        <path d="M1 9C2 2 7 0.5 10.500 0.5c5 0 9 4 8.500 10.500H7c0 5 6 6 11 3.500V18c-6 3.500-15.500 2-15.500-6C2.500 9 4.500 7 7 6 4 6 2 7 1 9zM7.200 8h6.300c0-4-5.500-4.500-6.300 0z" fill="#0a7bd8" />
      </svg>
    ),
  },
  {
    id: 'explorer',
    icon: (
      <svg width="21" height="18" viewBox="0 0 21 18">
        <path d="M0 2h8l2 2h10v13H0z" fill="#f3d272" />
        <path d="M1 6h19v11H1z" fill="#fbe49a" />
        <path d="M4 11h13v7h-3v-4H7v4H4z" fill="#4cb3dd" />
      </svg>
    ),
  },
  {
    id: 'store',
    icon: (
      <svg width="22" height="22" viewBox="0 0 22 22">
        <path d="M7 6c0-6 8-6 8 0" fill="none" stroke="#ddd" strokeWidth="1.3" />
        <path d="M0 5h22l-1 17H1z" fill="#fff" />
        <path d="M6 8h5v5H6z" fill="#e2522b" />
        <path d="M12 8h5v5h-5z" fill="#7cb928" />
        <path d="M6 14h5v5H6z" fill="#2aa3e0" />
        <path d="M12 14h5v5h-5z" fill="#f5b921" />
      </svg>
    ),
  },
  { id: 'word', icon: <Tile color="#2b579a" letter="W" paper="M14 6h6M14 8.500h6M14 11h6M14 13.500h6" /> },
  {
    id: 'mail',
    icon: (
      <svg width="23" height="19" viewBox="0 0 23 19">
        <path d="M0 7L11.500 0 23 7v12H0z" fill="#fff" />
        <path d="M1 7h21l-9 4 2 4z" fill="#10263c" />
      </svg>
    ),
  },
  {
    id: 'player',
    icon: (
      <svg width="19" height="18" viewBox="0 0 19 18">
        <path d="M3 0h16v16H3z" fill="#5b93c0" />
        <path d="M0 2h16v16H0z" fill="#a9cde6" />
        <circle cx="8" cy="10" r="6.5" fill="#ee7f2b" />
        <path d="M6 6l6 4-6 4z" fill="#fff" />
      </svg>
    ),
  },
  { id: 'onenote', icon: <Tile color="#80397b" letter="N" paper="M14 6h4M14 9h4M14 12h4M19 3v14" /> },
  {
    id: 'photoshop',
    icon: (
      <svg width="20" height="19" viewBox="0 0 20 19">
        <path d="M0.7 0.7h18.600v17.600H0.7z" fill="#0a0c45" stroke="#8fb8ee" strokeWidth="1.3" />
        <text x="3.500" y="13.500" fontSize="10.5" fontWeight="700" fill="#a6c8f5">Ps</text>
      </svg>
    ),
  },
  { id: 'excel', bg: 'bg-[#0d4a82]', icon: <Tile color="#1e7145" letter="X" paper="M14 6h6M14 8.500h6M14 11h6M14 13.500h6M17 5v10" /> },
  {
    id: 'downloader',
    bg: 'bg-[#1d3c4c] border-l-[7px] border-[#3c9a4c] pr-2',
    icon: (
      <svg width="23" height="20" viewBox="0 0 23 20">
        <circle cx="14" cy="7" r="7" fill="#2f74b8" />
        <path d="M8 5c3-5 8-5 11-2-1 4-6 5-10 5z" fill="#f0d848" />
        <path d="M3 8c-3 6 1 10 7 9l1-3c-3 1-5-1-4-5z" fill="#e5b63a" />
        <path d="M5 10l17 5-6 1-2 4-3-4-6-1z" fill="#2b9a34" />
      </svg>
    ),
  },
  {
    id: 'recorder',
    bg: 'bg-[#20364c]',
    icon: (
      <svg width="20" height="17" viewBox="0 0 20 17">
        <path d="M0 1l20-1v17H0z" fill="#f4f2ee" />
        <circle cx="7.500" cy="10" r="3.6" fill="#e5702a" />
        <path d="M14.500 4h3v10h-3z" fill="#e5702a" />
        <circle cx="11.500" cy="5" r="1" fill="#e5702a" />
      </svg>
    ),
  },
  {
    id: 'movies',
    icon: (
      <svg width="22" height="22" viewBox="0 0 22 22" fill="#fff">
        <path d="M1 8h21v14H1z" />
        <path d="M0 2l3-0.300 3 4-4 0.500zM6 1.400l3-0.300 3 4-3 0.300zM12 0.800l3-0.300 3 4-3 0.300zM18 0.200l3-0.200 0.500 4-1 0.200z" />
      </svg>
    ),
  },
];

const Taskbar = () => (
  <div className="flex h-9 items-stretch bg-linear-to-b from-[#1a2c43] from-40% to-[#03203a] to-42% tracking-[-0.2px] text-white">
    <Slot className="w-[45px] bg-[#02203a] pt-0.5">
      <svg width="16" height="16" viewBox="0 0 16 16" fill="#fff">
        <path d="M0 2.500l6.500-1V7.500H0zM7.500 1.300L16 0v7.500H7.500zM0 8.500h6.500v6L0 13.500zM7.500 8.500H16V16l-8.500-1.200z" />
      </svg>
    </Slot>
    <div className="flex w-[324px] items-center bg-[#344f67] pt-0.5 pl-[9px]">
      <svg width="20" height="20" viewBox="0 0 20 20" fill="none"><circle cx="10" cy="10" r="8.5" stroke="#f2f5f8" strokeWidth="2.6" /></svg>
      <span className="ml-[9px] flex-1 pt-px text-[13.7px] leading-none text-[#a9b9c7]">Type here to search</span>
      <svg className="mr-3.5" width="11" height="16" viewBox="0 0 11 16" fill="none" stroke="#b6c4d0" strokeWidth="1.1">
        <path d="M3 0.5h5v10H3zM0.5 7.500V13h10V7.500M5.500 13v2.500M3 15.500h5" />
      </svg>
    </div>
    <div className="ml-[3px] flex">
      {TASKS.map(({ id, icon, bg }) => (
        <Slot key={id} className={clsx('mr-px w-[45px] pt-0.5', bg)}>{icon}</Slot>
      ))}
    </div>
    <div className="flex flex-1 items-center justify-end bg-linear-to-r from-transparent from-48% to-[#03203a] to-49% pt-0.5">
      <svg width="12" height="7" viewBox="0 0 12 7" fill="none" stroke="#fff" strokeWidth="1.3"><path d="M1 6.500l5-5 5 5" /></svg>
      <svg className="ml-[9px]" width="16" height="12" viewBox="0 0 16 12" fill="none" stroke="#fff" strokeWidth="1.2">
        <path d="M5 3h9v8H5zM15.500 5.500v3M1 0v3M4 0v3M0 3h5v2.500H0zM2.500 6v4H5" />
        <path d="M7 5h3v4H7z" fill="#fff" />
      </svg>
      <svg className="ml-2" width="15" height="11" viewBox="0 0 15 11" fill="#fff">
        <path d="M3 10C-1 9 0 5 3 5c0-4 6-6 8-2 3 0 3 2 3 3H8c-2 0-3 3-5 4z" />
        <path d="M6 11c-2-2 0-4 2-3.500 1-2 4-1.500 4.500 0 3 0 3 3.500 0 3.500z" />
      </svg>
      <svg className="ml-[7px]" width="17" height="13" viewBox="0 0 17 13" fill="none" stroke="#fff" strokeWidth="1.1">
        <path d="M0.5 4.500h2.500L6.500 1v11L3 8.500H0.5zM9 4c1 1.500 1 3.500 0 5M11.500 2.500c2 2.500 2 5.500 0 8M14 1c3 3.500 3 7.500 0 11" />
      </svg>
      <svg className="ml-[9px]" width="13" height="13" viewBox="0 0 13 13" fill="none" stroke="#c6cfd8" strokeWidth="1.2">
        <path d="M1 12C1 6 6 1 12 1M4 12c0-4 4-8 8-8M7 12c0-3 2-5 5-5" />
        <circle cx="11" cy="11" r="1.2" fill="#fff" />
      </svg>
      <span className="ml-2.5 text-[11px] leading-none">ENG</span>
      <div className="ml-[8px] flex w-[58px] flex-col items-center text-[10.7px] leading-[17px]">
        <span>3:25 PM</span>
        <span>12/25/2017</span>
      </div>
      <svg className="mr-[17px] ml-[13px]" width="16" height="15" viewBox="0 0 16 15" fill="none" stroke="#fff" strokeWidth="1.2">
        <path d="M1 1h14v10.500h-4L8 14v-2.500H1z" />
      </svg>
    </div>
  </div>
);

const App = () => (
  <div className="flex h-[720px] w-[1280px] flex-col overflow-hidden bg-[#e6e6e6] font-['Open_Sans','Noto_Sans',sans-serif] tracking-[-0.35px]">
    <div className="relative h-[60px] bg-[#217346]">
      <HeaderArt />
      <TitleBar />
      <MenuTabs />
    </div>
    <Ribbon />
    <FormulaBar />
    <Sheet />
    <SheetTabs />
    <StatusBar />
    <Taskbar />
  </div>
);

export default App;
